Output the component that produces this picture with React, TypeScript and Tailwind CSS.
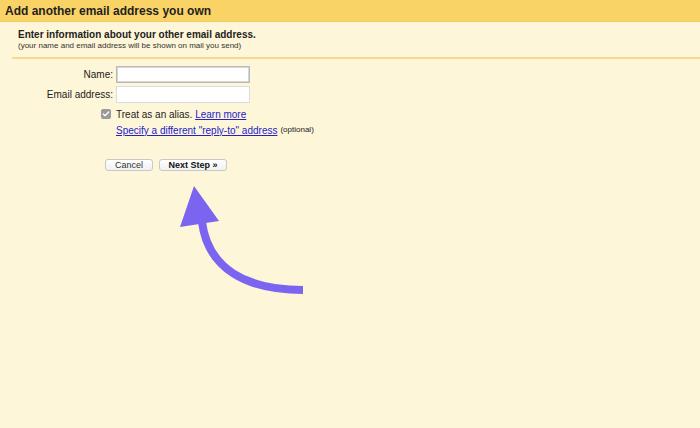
import { Check } from 'lucide-react'

// Row in the form: label on the left, field on the right
function FieldRow({ label, children }: { label: string; children: React.ReactNode }) {
  return (
    <div className="flex items-center h-[20px]">
      <label className="w-[113px] text-right text-[10px] text-[#222]">{label}</label>
      <div className="pl-[3px]">{children}</div>
    </div>
  )
}

export default function App() {
  return (
    <div className="w-[700px] h-[428px] bg-[#fef6d8] font-['Liberation_Sans',Arial,sans-serif] text-[#222] overflow-hidden relative">
      {/* Title bar */}
      <div className="h-[22px] bg-[#f9d366] flex items-center pl-[5px] border-b border-[#f3cc5f]">
        <h1 className="text-[12px] font-bold leading-none text-[#1f1f1f]">Add another email address you own</h1>
      </div>

      {/* Intro */}
      <div className="ml-[12px] pl-[6px] pt-[7px] pb-[6px] border-b-2 border-[#f6d98a]">
        <div className="text-[10px] font-bold leading-[12px]">Enter information about your other email address.</div>
        <div className="text-[8px] leading-[10px] text-[#333]">(your name and email address will be shown on mail you send)</div>
      </div>

      {/* Form */}
      <div className="pt-[5px]">
        <FieldRow label="Name:">
          <input className="w-[134px] h-[17px] bg-white border border-[#b9b9b9] shadow-[inset_0_0_0_1px_#d6d6d6] outline-none" />
        </FieldRow>
        <FieldRow label="Email address:">
          <input className="w-[134px] h-[17px] bg-white border border-[#dcdcdc] outline-none" />
        </FieldRow>

        <div className="flex items-center h-[18px] pl-[101px] mt-[1px]">
          <span className="w-[10px] h-[10px] rounded-[2px] bg-[#9a9a9a] flex items-center justify-center">
            <Check className="w-[8px] h-[8px] text-white" strokeWidth={4} />
          </span>
          <span className="ml-[5px] text-[10px]">
            Treat as an alias.{' '}
            <a className="text-[#2222cc] underline">Learn more</a>
          </span>
        </div>

        <div className="flex items-center h-[14px] pl-[116px]">
          <a className="text-[10px] text-[#2222cc] underline">Specify a different "reply-to" address</a>
          <span className="ml-[3px] text-[8px]">(optional)</span>
        </div>

        {/* Actions */}
        <div className="flex gap-[6px] pl-[105px] mt-[22px]">
          <button className="w-[48px] h-[12px] rounded-[3px] border border-[#c8c8c8] bg-gradient-to-b from-white to-[#f1f1f1] text-[9px] leading-none text-[#333]">
            Cancel
          </button>
          <button className="w-[68px] h-[12px] rounded-[3px] border border-[#c8c8c8] bg-gradient-to-b from-white to-[#f1f1f1] text-[9px] font-bold leading-none text-[#111]">
            Next Step »
          </button>
        </div>
      </div>

      {/* Pointer arrow */}
      <svg className="absolute left-0 top-0 pointer-events-none" width="700" height="428" viewBox="0 0 700 428">
        <path d="M202 222 C208 268 245 290 303 290" fill="none" stroke="#7b65f0" strokeWidth="8" />
        <polygon points="194,186 180,227 219,221" fill="#7b65f0" />
      </svg>
    </div>
  )
}
